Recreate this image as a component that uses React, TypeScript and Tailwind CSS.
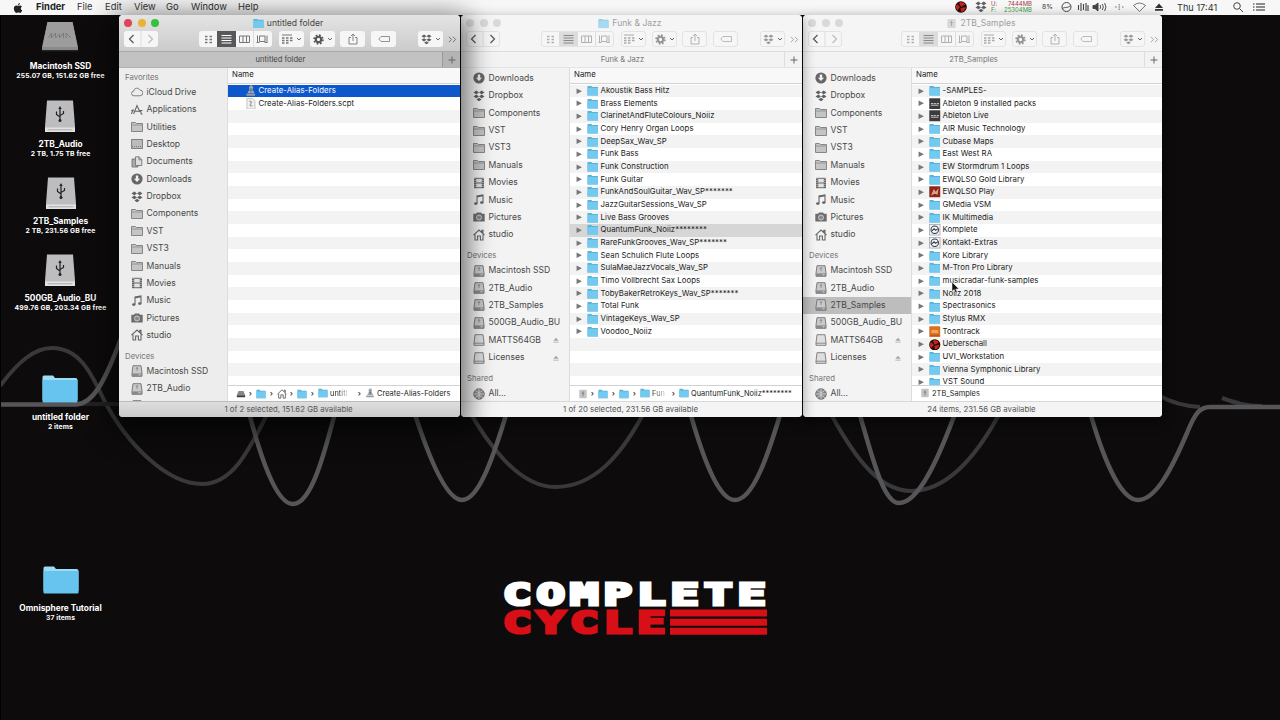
import {JSX, ReactNode} from "react";

type Entry = { name: string; icon?: string; eject?: boolean; selected?: boolean };
type Section = { title?: string; items: Entry[] };
type Crumb = { icon: string; label?: string; width: string; labelStyle?: string };

const places: Entry[] = [
    {name: "Downloads", icon: "downloads"},
    {name: "Dropbox", icon: "dropbox"},
    {name: "Components", icon: "folderGray"},
    {name: "VST", icon: "folderGray"},
    {name: "VST3", icon: "folderGray"},
    {name: "Manuals", icon: "folderGray"},
    {name: "Movies", icon: "movies"},
    {name: "Music", icon: "music"},
    {name: "Pictures", icon: "camera"},
    {name: "studio", icon: "home"},
];

const favorites: Entry[] = [
    {name: "iCloud Drive", icon: "cloud"},
    {name: "Applications", icon: "apps"},
    {name: "Utilities", icon: "folderGray"},
    {name: "Desktop", icon: "desktop"},
    {name: "Documents", icon: "documents"},
    ...places,
];

const devices = (selected?: string): Entry[] => [
    {name: "Macintosh SSD", icon: "disk"},
    {name: "2TB_Audio", icon: "disk"},
    {name: "2TB_Samples", icon: "disk"},
    {name: "500GB_Audio_BU", icon: "disk"},
    {name: "MATTS64GB", icon: "drive", eject: true},
    {name: "Licenses", icon: "drive", eject: true},
].map((d) => ({...d, selected: d.name === selected}));

const shared: Section = {title: "Shared", items: [{name: "All...", icon: "globe"}]};

const funkFiles: Entry[] = [
    "Akoustik Bass Hitz", "Brass Elements", "ClarinetAndFluteColours_Noiiz", "Cory Henry Organ Loops",
    "DeepSax_Wav_SP", "Funk Bass", "Funk Construction", "Funk Guitar", "FunkAndSoulGuitar_Wav_SP*******",
    "JazzGuitarSessions_Wav_SP", "Live Bass Grooves", "QuantumFunk_Noiiz********", "RareFunkGrooves_Wav_SP*******",
    "Sean Schulich Flute Loops", "SulaMaeJazzVocals_Wav_SP", "Timo Vollbrecht Sax Loops",
    "TobyBakerRetroKeys_Wav_SP*******", "Total Funk", "VintageKeys_Wav_SP", "Voodoo_Noiiz",
].map((name) => ({name, selected: name.startsWith("Quantum")}));

const sampleFiles: Entry[] = [
    {name: "-SAMPLES-"},
    {name: "Ableton 9 installed packs", icon: "ableton"},
    {name: "Ableton Live", icon: "ableton"},
    {name: "AIR Music Technology"},
    {name: "Cubase Maps"},
    {name: "East West RA"},
    {name: "EW Stormdrum 1 Loops"},
    {name: "EWQLSO Gold Library"},
    {name: "EWQLSO Play", icon: "play"},
    {name: "GMedia VSM"},
    {name: "IK Multimedia"},
    {name: "Komplete", icon: "ni"},
    {name: "Kontakt-Extras", icon: "ni"},
    {name: "Kore Library"},
    {name: "M-Tron Pro Library"},
    {name: "musicradar-funk-samples"},
    {name: "Noiiz 2018"},
    {name: "Spectrasonics"},
    {name: "Stylus RMX"},
    {name: "Toontrack", icon: "toontrack"},
    {name: "Ueberschall", icon: "ueberschall"},
    {name: "UVI_Workstation"},
    {name: "Vienna Symphonic Library"},
    {name: "VST Sound"},
];

const icons: Record<string, ReactNode> = {
    folder: <>
        <path d="M.5 1h4l1 1h6v9H.5z" fill="#56b4dc"/>
        <path d="M.5 3h11v8H.5z" fill="#73c9ee"/>
    </>,
    folderGray: <>
        <path d="M.5 1.5h4l1 1h6v8H.5z" fill="#c4c4c4" stroke="#7d7d7d" strokeWidth=".9"/>
        <path d="M.5 4h11" stroke="#8d8d8d" strokeWidth=".8"/>
    </>,
    cloud: <path d="M3 9.8a2.3 2.3 0 0 1-.3-4.6A3.2 3.2 0 0 1 8.8 4 2.9 2.9 0 0 1 9 9.8z" fill="none" stroke="#777" strokeWidth=".9"/>,
    apps: <path d="M2.6 10 6 1.6 9 8M3.8 7.2h5M.4 9.8l2-4.6M.3 6.3l2.2 1M8.5 6.3l3 .2M9.6 6.8l.6 3.2h1.4" fill="none" stroke="#666" strokeWidth="1.1"/>,
    desktop: <>
        <rect x=".6" y="1.5" width="10.8" height="9" fill="#bcbcbc" stroke="#777" strokeWidth=".9"/>
        <path d="M1 8.6h10" stroke="#777" strokeDasharray="1 1"/>
    </>,
    documents: <>
        <path d="M1 3h6v8H1z" fill="#aaa" stroke="#777" strokeWidth=".9"/>
        <path d="M4.5.8H8L10.8 3.5V9.5H4.5z" fill="#ddd" stroke="#777" strokeWidth=".9"/>
        <path d="M8 .8v3h2.8" fill="none" stroke="#777" strokeWidth=".9"/>
    </>,
    downloads: <>
        <circle cx="6" cy="6" r="5.6" fill="#666"/>
        <path d="M4.8 2.5h2.4v3.3h1.9L6 9 2.9 5.8h1.9z" fill="#f2f2f2"/>
    </>,
    dropbox: <path d="M3.3.6 6 2.4 3.3 4.2.5 2.4zM8.7.6l2.8 1.8-2.8 1.8L6 2.4zM3.3 4.6 6 6.4 3.3 8.2.5 6.4zM8.7 4.6l2.8 1.8-2.8 1.8L6 6.4zM6 7.8l2.6 1.7L6 11.3 3.4 9.5z" fill="#606060"/>,
    movies: <>
        <rect x="1" y=".8" width="10" height="10.4" fill="#666"/>
        <path d="M3.2 1.8h5.6v3.6H3.2zM3.2 6.6h5.6v3.6H3.2z" fill="#e2e2e2"/>
        <path d="M2 1v10M10 1v10" stroke="#ddd" strokeWidth=".9" strokeDasharray="1 1"/>
    </>,
    music: <>
        <path d="M4 9.3V2l6-1.2v7.4M4 3l6-1.2" fill="none" stroke="#666" strokeWidth="1.1"/>
        <ellipse cx="2.8" cy="9.6" rx="1.7" ry="1.3" fill="#666"/>
        <ellipse cx="8.8" cy="8.6" rx="1.7" ry="1.3" fill="#666"/>
    </>,
    camera: <>
        <path d="M.3 2.8h2.8l.8-1.3h4.2l.8 1.3h2.8v7.7H.3z" fill="#6d6d6d"/>
        <circle cx="6" cy="6.5" r="2.5" fill="#888" stroke="#ddd" strokeWidth=".8"/>
    </>,
    home: <path d="M.5 6.2 6 1l5.5 5.2M2 5.5V11h2.6V7h2.8v4H10V5.5M8.8 3.2V1.4h1.2v3" fill="none" stroke="#666" strokeWidth="1.1"/>,
    disk: <>
        <path d="M2 .7h8L11 8v3.3H1V8z" fill="#c9c9c9" stroke="#707070" strokeWidth=".9"/>
        <path d="M1 8.4h10v2.8H1z" fill="#8a8a8a"/>
        <path d="M6 2v4M4.7 3.3h2.6" stroke="#888" strokeWidth=".8"/>
        <path d="M7.5 9.8h2" stroke="#eee" strokeWidth=".8"/>
    </>,
    drive: <>
        <path d="M2 .7h8L11 9v2.3H1V9z" fill="#dedede" stroke="#777" strokeWidth=".9"/>
        <path d="M1 9.2h10" stroke="#777" strokeWidth=".8"/>
    </>,
    globe: <>
        <circle cx="6" cy="6" r="5.3" fill="#8a8a8a" stroke="#666" strokeWidth=".8"/>
        <path d="M1 6h10M6 .8v10.4M2.3 2.4C5 5 7 5 9.7 2.4M2.3 9.6C5 7 7 7 9.7 9.6" fill="none" stroke="#ddd" strokeWidth=".8"/>
    </>,
    ableton: <>
        <rect x=".3" y=".3" width="11.4" height="11.4" fill="#3b3b3b"/>
        <path d="M2 5.8h2.6M5.2 5.8h2M8 5.8h2.4M2 7.5h8" stroke="#ccc" strokeWidth="1"/>
    </>,
    play: <>
        <rect x=".3" y=".3" width="11.4" height="11.4" fill="#8d251c"/>
        <path d="M2 10 5 3l2 3 3-4-1 7-3-1z" fill="#e2a184"/>
    </>,
    ni: <>
        <rect x=".5" y=".5" width="11" height="11" fill="#f4f6f8" stroke="#9aa3ad" strokeWidth=".8"/>
        <circle cx="6" cy="6" r="3.9" fill="none" stroke="#323a44" strokeWidth="1.1"/>
        <path d="M3 7.2 5.3 5l1.6 1.6L9.3 4.8" fill="none" stroke="#323a44" strokeWidth="1.1"/>
    </>,
    toontrack: <>
        <rect x=".3" y=".3" width="11.4" height="11.4" rx="1" fill="#d9701f"/>
        <path d="M2.5 4h7v3.5h-7z" fill="#f0a35c"/>
        <path d="M1 9.7h10" stroke="#b4530f"/>
    </>,
    ueberschall: <>
        <circle cx="6" cy="6" r="5.8" fill="#1c0808"/>
        <path d="M6 1a5 5 0 0 1 4.4 2.7L6 6 4 2zM10.8 6A5 5 0 0 1 6 11L5.6 7zM2 3l3 3-2.5 3.5A5 5 0 0 1 2 3z" fill="#c4241b"/>
    </>,
    script: <>
        <path d="M2 .5h6L10.4 3v8.5H2z" fill="#f1f1f1" stroke="#aaa" strokeWidth=".7"/>
        <path d="M4 3.5c3-1 4 1 2 2.5s0 3 2 2M6 3v6" fill="none" stroke="#999" strokeWidth=".9"/>
    </>,
    applet: <>
        <path d="M5.2.5h2.4l1 2.5-1 1.5 2.4 4H2.5l2.4-4-.9-1.5z" fill="#a3abb3"/>
        <path d="M1.5 9h9v2.2h-9z" fill="#959da5"/>
        <path d="M6.2 3v5M5 5.5h2.5" stroke="#5a636c" strokeWidth=".8"/>
    </>,
    ssd: <>
        <path d="M3 2.5h6l2 5H1z" fill="#888"/>
        <path d="M1 7.5h10v2.5H1z" fill="#3d3d3d"/>
    </>,
    usb: <>
        <rect x="1.5" y="1" width="9" height="10" rx=".8" fill="#c4c4c4"/>
        <path d="M6 2.8v6M4.5 5h3" stroke="#777" strokeWidth="1"/>
    </>,
    eject: <path d="M6 2.5 10 7H2zM2 8.5h8v1.3H2z" fill="#a5a5a5"/>,
};

function Icon({name, className = "size-3"}: { name: string; className?: string }): JSX.Element {
    return <svg viewBox="0 0 12 12" className={`shrink-0 ${className}`}>{icons[name]}</svg>;
}

function Wallpaper(): JSX.Element {
    return (
        <svg className="absolute inset-0" width="1280" height="720" fill="none">
            <g stroke="#39383a" strokeWidth="4">
                <path d="M0 386C18 362 34 348 52 348C78 348 90 370 104 400C128 446 168 484 202 484C234 484 250 448 272 405"/>
                <path d="M466 405C486 442 518 487 555 487C594 487 622 456 648 405"/>
                <path d="M826 405C850 450 876 491 911 491C948 491 978 456 1004 405"/>
                <path d="M1160 396C1172 403 1184 406 1200 407M1222 398C1236 403 1246 406 1262 406"/>
                <path d="M78 404H120" stroke="#222"/>
            </g>
            <g stroke="#565557" strokeWidth="4.5">
                <path d="M0 404.5H76C92 404 104 386 124 330"/>
                <path d="M247 405C260 456 276 504 293 504C311 504 324 456 337 405"/>
                <path d="M412 405C428 456 446 500 462 500C479 500 494 456 509 405"/>
                <path d="M688 405C702 456 718 500 735 500C753 500 768 456 783 405"/>
                <path d="M857 405C872 456 883 503 899 503C919 503 940 456 958 405"/>
                <path d="M1088 405C1102 456 1120 500 1138 500C1156 500 1172 468 1187 433C1195 413 1200 407 1210 407H1280"/>
            </g>
            <path d="M.5 15v705" stroke="#000"/>
        </svg>
    );
}

function Logo(): JSX.Element {
    const letter = (c: string, i: number, y: number) => (
        <text key={i} x={1 + i * 33.5} y={y} textLength="28.5" lengthAdjust="spacingAndGlyphs">{c}</text>
    );
    return (
        <svg className="absolute left-[502px] top-[580px]" width="266" height="56" fontFamily="DejaVu Sans Mono"
             fontWeight="700" fontSize="30" strokeWidth="3" strokeLinejoin="miter">
            <g fill="#fff" stroke="#fff">{"COMPLETE".split("").map((c, i) => letter(c, i, 24.5))}</g>
            <g fill="#d80f16" stroke="#d80f16">{"CYCLE".split("").map((c, i) => letter(c, i, 53))}</g>
            <path d="M168 33h97M168 42.3h97M168 51.3h97" stroke="#d80f16" strokeWidth="7"/>
        </svg>
    );
}

function MenuBar(): JSX.Element {
    return (
        <div className="relative flex h-[15px] items-center bg-[#f7f7f7] pl-[13px] text-[9.4px] text-[#333]">
            <svg viewBox="0 0 12 12" className="mr-[13px] size-[10px]">
                <path d="M8.3 0c.1 1.3-1 2.6-2.3 2.7C5.9 1.4 7 .2 8.3 0zM6.2 3.4c.7 0 1.3-.5 2.3-.5.9 0 1.7.5 2.2 1.2-2 1.3-1.7 3.9.4 4.7C10.5 10.5 9.6 12 8.5 12c-.8 0-1.2-.5-2.2-.5S5 12 4.2 12C2.7 12 1 9 1 6.7 1 4.400 2.4 3 4 3c.9 0 1.7.4 2.2.4z" fill="#222"/>
            </svg>
            <span className="w-[41px] font-bold text-[#222]">Finder</span>
            <span className="w-7">File</span>
            <span className="w-[29px]">Edit</span>
            <span className="w-8">View</span>
            <span className="w-[25px]">Go</span>
            <span className="w-[47px]">Window</span>
            <span>Help</span>

            <div className="ml-auto flex items-center pr-[14px]">
                <Icon name="ueberschall" className="mr-2 size-3"/>
                <Icon name="dropbox" className="mr-[4px] size-3"/>
                <div className="mr-[10px] w-[41px] text-[6px] leading-[6px]">
                    <div className="flex justify-between text-[#a5384e]"><span>U:</span><span>7444MB</span></div>
                    <div className="flex justify-between text-[#3f9b45]"><span>F:</span><span>25304MB</span></div>
                </div>
                <span className="mr-[9px] w-3 text-[6.8px]">8%</span>
                <svg viewBox="0 0 85 12" className="mr-[6px] h-3 w-[85px] -translate-x-0.5" fill="none" stroke="#444">
                    <circle cx="5.5" cy="6" r="4.5"/>
                    <path d="M1.5 7.5c3-2 5 0 8-3"/>
                    <path d="M17.5 4v5M20 2v8M22.5 3v6M25 2v8M27 4v6" strokeWidth="1.1"/>
                    <path d="M32 4.5h2l3-2.5v8l-3-2.5h-2z" fill="#444"/>
                    <path d="M39 4q1.5 2 0 4M41.3 3q2.200 3 0 6M43.6 2q2.8 4 0 8" strokeWidth=".9"/>
                    <path d="M54 6h1.5M57.5 6h1.5M61 6h1.5M58.3 3v1.5M58.3 7.5V9" stroke="#999" strokeWidth="1.5"/>
                    <path d="M72.5 4.5Q78.5-.5 84.5 4.5L78.5 10.5z" stroke="#666" strokeWidth=".9"/>
                </svg>
                <svg viewBox="0 0 10 10" className="mr-[13px] size-[10px]" fill="#333">
                    <path d="M5 1.5 9 6H1zM1 7h8v1.7H1z"/>
                </svg>
                <span className="w-[55px] text-[9.2px]">Thu 17:41</span>
                <svg viewBox="0 0 34 12" className="h-3 w-[34px]" fill="none" stroke="#444">
                    <circle cx="5" cy="5" r="3.3"/>
                    <path d="M7.5 7.5 11 11"/>
                    <path d="M24 3h9M24 6h9M24 9h9M21 3h1.5M21 6h1.5M21 9h1.5" stroke="#222" strokeWidth="1.2"/>
                </svg>
            </div>
        </div>
    );
}

function DesktopItem({kind, name, info, className = ""}: { kind: "ssd" | "usb" | "folder"; name: string; info: string; className?: string }): JSX.Element {
    return (
        <div className={`flex shrink-0 flex-col items-center text-white ${className}`}>
            <svg viewBox="0 0 36 32" className="h-8 w-9">
                {kind === "ssd" && <>
                    <path d="M5.500 0h25L36 25v4H0v-4z" fill="#8a8a8a"/>
                    <path d="M5.500 0h25L35.500 25H.5z" fill="#9d9d9d"/>
                    <path d="M6.500 16l3-5v5l4-5v5l4-4v4l4-5v5M24 16v-5l5 5" fill="none" stroke="#7b7b7b"/>
                    <path d="M0 28h36v1.500H0z" fill="#222"/>
                </>}
                {kind === "usb" && <>
                    <path d="M5 .5h26l2 26v4.500q0 1-1 1H4q-1 0-1-1v-4.500z" fill="#bdbcbf"/>
                    <path d="M3 27.500h30V32H3z" fill="#e2e2e3"/>
                    <path d="M5.500 29.800h25" stroke="#aaa"/>
                    <path d="M18 8v12M18 17l-3.500-2.500v-3M18 15.500l3.500-2v-2.500" fill="none" stroke="#222" strokeWidth="1.2"/>
                    <path d="m18 6 1.700 3h-3.400z" fill="#222"/>
                    <circle cx="18" cy="20.5" r="1.5" fill="#222"/>
                </>}
                {kind === "folder" && <>
                    <path d="M.5 4q0-1.500 1.500-1.500h9L13 5h20.500q2 0 2 2v20H.5z" fill="#9bdcf7"/>
                    <path d="M.5 7h35v21.500q0 1-1 1H1.500q-1 0-1-1z" fill="#66c4ee"/>
                </>}
            </svg>
            <span className="mt-1.5 text-[8.3px] leading-3 font-bold whitespace-nowrap">{name}</span>
            <span className="text-[6.8px] leading-[8px] font-bold tracking-[0.12px] whitespace-nowrap">{info}</span>
        </div>
    );
}

type FinderProps = {
    title: string;
    titleIcon: string;
    active?: boolean;
    className: string;
    spacer: string;
    forward?: boolean;
    sections: Section[];
    sidebarPad: string;
    files: Entry[];
    crumbs: Crumb[];
    status: string;
};

function Chevron(): JSX.Element {
    return <svg viewBox="0 0 6 6" className="size-[6px]" fill="none" stroke="#666"><path d="m1 2 2 2 2-2"/></svg>;
}

function Toolbar({active, spacer, forward}: { active?: boolean; spacer: string; forward?: boolean }): JSX.Element {
    const box = `flex h-4 shrink-0 items-center justify-center rounded-[3px] ${active ? "bg-[#f6f6f6]" : "border border-[#e3e3e3] bg-[#f6f6f6]"}`;
    const dim = active ? "" : "opacity-60";

    return (
        <div className="flex h-4 items-center pl-[5px]">
            <div className={`${box} w-[34px]`}>
                <svg viewBox="0 0 34 16" className="h-4 w-[34px] shrink-0" fill="none" strokeWidth="1.2">
                    <path d="M9.5 4 5.5 8l4 4" stroke="#555"/>
                    <path d="M17 0v16" stroke="#ddd" strokeWidth="1"/>
                    <path d="m24.5 4 4 4-4 4" stroke={forward ? "#555" : "#bbb"}/>
                </svg>
            </div>
            <div className={`shrink-0 ${spacer}`}/>
            <div className={`${box} mr-[7px] w-[73px] overflow-hidden`}>
                <svg viewBox="0 0 73 16" className="h-4 w-[73px] shrink-0" fill="none" stroke={active ? "#777" : "#b0b0b0"}>
                    <rect x="18" width="19" height="16" fill={active ? "#58585a" : "#dcdcdc"} stroke="none"/>
                    <path d="M6 5.5h2.5M6 8.5h2.5M6 11.5h2.5M10.5 5.5H13M10.5 8.5H13M10.5 11.5H13" strokeWidth="1.5"/>
                    <path d="M22.5 4.5h10M22.5 7h10M22.5 9.5h10M22.5 12h10" stroke={active ? "#fff" : "#888"}/>
                    <path d="M40.5 5h10v6.5h-10zM44 5v6.5M47.5 5v6.5"/>
                    <path d="M58.5 4.5v7M60.5 5h5.5v5.5h-5.5zM68 4.5v7M57.5 11.5h3M65.5 11.5h3"/>
                    <path d="M54.5 0v16" stroke="#ddd"/>
                </svg>
            </div>
            <div className={`${box} mr-[6px] w-[25px] gap-[3px]`}>
                <svg viewBox="0 0 11 10" className={`h-[10px] w-[11px] ${dim}`} stroke="#777" strokeWidth="1.5">
                    <path d="M0 1h10" strokeWidth="1"/>
                    <path d="M0 4h2.5M4 4h2.5M8 4h2.5M0 6.5h2.5M4 6.5h2.5M8 6.5h2.5M0 9h2.5M4 9h2.5"/>
                </svg>
                <Chevron/>
            </div>
            <div className={`${box} mr-[5px] w-[25px] gap-[3px]`}>
                <svg viewBox="0 0 12 12" className={`size-[11px] ${dim}`} fill="none" stroke="#555">
                    <circle cx="6" cy="6" r="2.9" strokeWidth="2.2"/>
                    <circle cx="6" cy="6" r="4.8" strokeWidth="1.8" strokeDasharray="1.9 1.87"/>
                </svg>
                <Chevron/>
            </div>
            <div className={`${box} mr-[6px] w-[25px]`}>
                <svg viewBox="0 0 12 12" className={`size-3 ${dim}`} fill="none" stroke="#777" strokeWidth=".9">
                    <path d="M4 4.5H2v6.5h8V4.5H8M6 8V1.5M4 3l2-2 2 2"/>
                </svg>
            </div>
            <div className={`${box} mr-[22px] w-[25px]`}>
                <svg viewBox="0 0 12 12" className={`size-3 ${dim}`} fill="none" stroke="#888" strokeWidth=".9">
                    <path d="M3 3.5h8.5v5H3L.8 6z"/>
                </svg>
            </div>
            <div className={`${box} w-[25px] gap-[3px]`}>
                <Icon name="dropbox" className={`size-[11px] ${dim}`}/>
                <Chevron/>
            </div>
            <svg viewBox="0 0 10 10" className={`ml-[5px] size-[9px] shrink-0 ${dim}`} fill="none" stroke="#666">
                <path d="m1 2 3 3-3 3M5.5 2l3 3-3 3"/>
            </svg>
        </div>
    );
}

function Sidebar({sections, pad}: { sections: Section[]; pad: string }): JSX.Element {
    return (
        <div className={`w-[109px] shrink-0 overflow-hidden border-r border-[#dcdcdc] text-[8.6px] text-[#484848] ${pad}`}>
            {sections.map((s, i) => (
                <div key={i} className="mb-[5.2px]">
                    {s.title && <div className="flex h-[13.5px] items-center pt-[1px] pl-[6px] text-[7.8px] text-[#777]">{s.title}</div>}
                    {s.items.map((item) => (
                        <div key={item.name} className={`flex h-[17.37px] items-center pl-[11.5px] ${item.selected ? "bg-[#bdbdbd]" : ""}`}>
                            <Icon name={item.icon!}/>
                            <span className="ml-[4px] whitespace-nowrap">{item.name}</span>
                            {item.eject && <Icon name="eject" className="mr-[9px] ml-auto size-2"/>}
                        </div>
                    ))}
                </div>
            ))}
        </div>
    );
}

function Finder({title, titleIcon, active, className, spacer, forward, sections, sidebarPad, files, crumbs, status}: FinderProps): JSX.Element {
    // pad the list with empty stripes down to the path bar
    const rows: (Entry | null)[] = [...files, ...Array(Math.max(0, 24 - files.length)).fill(null)];
    const lights = active ? ["bg-[#dc4655]", "bg-[#e9b432]", "bg-[#35c13c]"] : ["bg-[#d9d9d9]", "bg-[#d9d9d9]", "bg-[#d9d9d9]"];

    return (
        <div className={`relative flex h-[402px] shrink-0 flex-col overflow-hidden rounded-[4px] ${active ? "bg-[#ededed]" : "bg-[#f3f3f3]"} ${className}`}>
            <div className={`h-[37px] shrink-0 border-b ${active ? "border-[#aaa] bg-linear-to-b from-[#e4e4e4] to-[#cbcbcb]" : "border-[#dcdcdc] bg-[#f5f5f5]"}`}>
                <div className="relative flex h-4 items-center justify-center pr-[3px]">
                    <div className="absolute left-[5px] flex gap-[5.5px]">
                        {lights.map((l, i) => <span key={i} className={`size-2 rounded-full ${l}`}/>)}
                    </div>
                    <Icon name={titleIcon} className={`mr-[3px] size-[11px] ${active ? "" : "opacity-60"}`}/>
                    <span className={`text-[8.6px] ${active ? "text-[#444]" : "text-[#a0a0a0]"}`}>{title}</span>
                </div>
                <Toolbar active={active} spacer={spacer} forward={forward}/>
            </div>
            <div className={`flex h-4 shrink-0 border-b text-[7.6px] ${active ? "border-[#b0b0b0] bg-[#c2c2c2] text-[#444]" : "border-[#e4e4e4] bg-[#f3f3f3] text-[#777]"}`}>
                <div className="flex flex-1 items-center justify-center">{title}</div>
                <div className={`flex w-[18px] items-center justify-center border-l ${active ? "border-[#999] bg-[#b4b4b4]" : "border-[#ddd]"}`}>
                    <svg viewBox="0 0 8 8" className="size-2" stroke="#666"><path d="M4 .5v7M.5 4h7"/></svg>
                </div>
            </div>
            <div className="flex min-h-0 flex-1">
                <Sidebar sections={sections} pad={sidebarPad}/>
                <div className="flex min-w-0 flex-1 flex-col bg-white text-[7.8px] tracking-[0.05px] text-[#222]">
                    <div className="flex h-[16px] shrink-0 items-center border-b border-[#d2d2d2] bg-[#f8f8f8] pb-px pl-1">Name</div>
                    <div className="min-h-0 flex-1 overflow-hidden pt-[.5px]">
                        {rows.map((f, i) => (
                            <div key={i} className={`flex h-[12.68px] items-center pl-[5.5px] ${f?.selected ? (active ? "bg-[#0c58cb] text-white" : "bg-[#d6d6d6]") : i % 2 === 0 ? "bg-[#f3f3f3]" : ""}`}>
                                {f && <>
                                    <svg viewBox="0 0 6 6" className={`mr-[5px] size-[6.5px] shrink-0 ${active ? "invisible" : ""}`}>
                                        <path d="M.5.5v5l5-2.5z" fill="#777"/>
                                    </svg>
                                    <Icon name={f.icon ?? "folder"} className="size-[11.5px]"/>
                                    <span className="ml-[2px] whitespace-nowrap">{f.name}</span>
                                </>}
                            </div>
                        ))}
                    </div>
                    <div className="flex h-4 shrink-0 items-center border-t border-[#d2d2d2] pl-2 text-[7.4px]">
                        {crumbs.map((c, i) => (
                            <div key={i} className={`flex shrink-0 items-center ${c.width}`}>
                                <Icon name={c.icon} className="mr-0.5 size-[10px]"/>
                                {c.label && <span className={`whitespace-nowrap ${c.labelStyle ?? ""}`}>{c.label}</span>}
                                {i < crumbs.length - 1 && <span className="mr-[4px] ml-auto leading-none font-bold text-[#444]">›</span>}
                            </div>
                        ))}
                    </div>
                </div>
            </div>
            <div className={`flex h-4 shrink-0 items-center justify-center border-t pr-[2px] text-[7.8px] text-[#555] ${active ? "border-[#bbb] bg-linear-to-b from-[#dedede] to-[#cacaca]" : "border-[#d8d8d8] bg-[#f4f4f4]"}`}>
                {status}
            </div>
        </div>
    );
}

export default function App(): JSX.Element {
    return (
        <div className="relative h-[720px] w-[1280px] overflow-hidden bg-[#0d0b0c] font-['Inter',sans-serif]">
            <Wallpaper/>
            <MenuBar/>
            <div className="relative flex">
                <div className="flex h-[705px] w-[119px] shrink-0 flex-col items-center pt-[7px] pl-[2px]">
                    <DesktopItem kind="ssd" name="Macintosh SSD" info="255.07 GB, 151.62 GB free" className="h-[77.6px]"/>
                    <DesktopItem kind="usb" name="2TB_Audio" info="2 TB, 1.75 TB free" className="h-[77.3px]"/>
                    <DesktopItem kind="usb" name="2TB_Samples" info="2 TB, 231.56 GB free" className="h-[77.3px]"/>
                    <DesktopItem kind="usb" name="500GB_Audio_BU" info="499.76 GB, 203.34 GB free" className="h-[118.8px]"/>
                    <DesktopItem kind="folder" name="untitled folder" info="2 items" className="h-[191px]"/>
                    <DesktopItem kind="folder" name="Omnisphere Tutorial" info="37 items"/>
                </div>
                <Finder
                    active
                    title="untitled folder"
                    titleIcon="folder"
                    className="z-20 mr-px w-[341px] shadow-[0_8px_26px_8px_rgba(0,0,0,0.55)]"
                    spacer="w-[41px]"
                    sections={[{title: "Favorites", items: favorites}, {title: "Devices", items: devices().slice(0, 3)}]}
                    sidebarPad="pt-[2.2px]"
                    files={[
                        {name: "Create-Alias-Folders", icon: "applet", selected: true},
                        {name: "Create-Alias-Folders.scpt", icon: "script"},
                    ]}
                    crumbs={[
                        {icon: "ssd", width: "w-5"},
                        {icon: "folder", width: "w-[21px]"},
                        {icon: "home", width: "w-[20px]"},
                        {icon: "folder", width: "w-[21px]"},
                        {icon: "folder", width: "w-[47px]", label: "untitl", labelStyle: "bg-linear-to-r from-[#222] from-50% to-[#ccc] bg-clip-text text-transparent"},
                        {icon: "applet", width: "", label: "Create-Alias-Folders"},
                    ]}
                    status="1 of 2 selected, 151.62 GB available"
                />
                <Finder
                    title="Funk & Jazz"
                    titleIcon="folder"
                    className="z-10 mr-px w-[341px] shadow-[0_4px_12px_2px_rgba(0,0,0,0.3)]"
                    spacer="w-[41px]"
                    forward
                    sections={[{items: places}, {title: "Devices", items: devices()}, shared]}
                    sidebarPad="pt-[1.8px]"
                    files={funkFiles}
                    crumbs={[
                        {icon: "usb", width: "w-[20px]"},
                        {icon: "folder", width: "w-[21px]"},
                        {icon: "folder", width: "w-[21px]"},
                        {icon: "folder", width: "w-[39px]", label: "Fun", labelStyle: "bg-linear-to-r from-[#222] to-[#ccc] bg-clip-text text-transparent"},
                        {icon: "folder", width: "", label: "QuantumFunk_Noiiz********"},
                    ]}
                    status="1 of 20 selected, 231.56 GB available"
                />
                <Finder
                    title="2TB_Samples"
                    titleIcon="usb"
                    className="w-[359px] shadow-[0_4px_12px_2px_rgba(0,0,0,0.4)]"
                    spacer="w-[59px]"
                    sections={[{items: places}, {title: "Devices", items: devices("2TB_Samples")}, shared]}
                    sidebarPad="pt-[1.8px]"
                    files={sampleFiles}
                    crumbs={[{icon: "usb", width: "", label: "2TB_Samples"}]}
                    status="24 items, 231.56 GB available"
                />
            </div>
            <Logo/>
            <svg className="absolute left-[951px] top-[281px] z-30" width="9" height="13" viewBox="0 0 9 13">
                <path d="M1 1v9.5l2.2-2 1.5 3.5 1.6-.7-1.5-3.3H8z" fill="#111" stroke="#fff" strokeWidth=".5"/>
            </svg>
        </div>
    );
}
